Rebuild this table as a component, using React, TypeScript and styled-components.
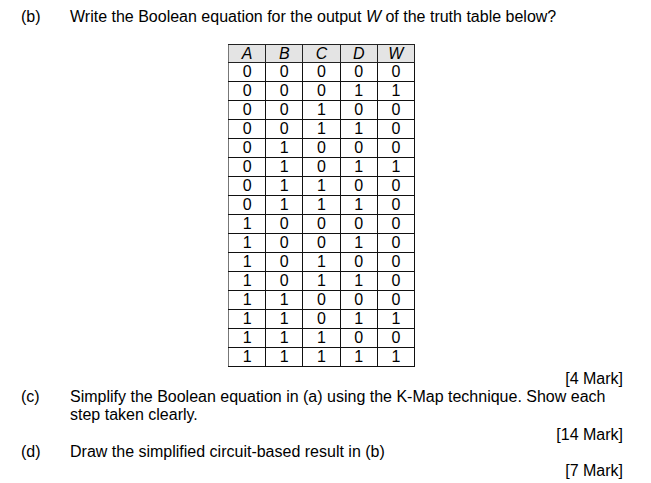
import React from "react";
import styled, { createGlobalStyle } from "styled-components";

const Global = createGlobalStyle`
  html, body { margin: 0; padding: 0; background: #fff; }
  body { font-family: "Liberation Sans", Arial, sans-serif; color: #000; }
`;

const Page = styled.div`
  width: 651px;
  height: 483px;
  box-sizing: border-box;
  padding: 8px 28px 0 21px;
  font-size: 16px;
  line-height: 18px;
`;

const Question = styled.div<{ $mt?: number }>`
  display: grid;
  grid-template-columns: 49px 1fr;
  margin-top: ${(p) => p.$mt ?? 0}px;
`;

const Label = styled.span``;

const Body = styled.div``;

const Marks = styled.div<{ $mt?: number }>`
  text-align: right;
  margin-top: ${(p) => p.$mt ?? 0}px;
`;

const TableWrap = styled.div`
  display: flex;
  padding-left: 207px;
  margin-top: 18px;
`;

const Table = styled.table`
  border-collapse: collapse;
  table-layout: fixed;
  width: 187px;
  font-size: 16px;
`;

const Th = styled.th<{ $c: string }>`
  height: 17px;
  padding: 0;
  background: #e4e4e4;
  font-style: italic;
  font-weight: normal;
  text-align: center;
  border: 1px solid #222;
  border-left-color: ${(p) => p.$c};
  line-height: 17px;
`;

const Td = styled.td<{ $c: string }>`
  height: 18px;
  padding: 0;
  text-align: center;
  border: 1px solid #111;
  border-left-color: ${(p) => p.$c};
  line-height: 18px;
`;

const leftColors = ["#777", "#111", "#888", "#888", "#111"];
const heads = ["A", "B", "C", "D", "W"];
const W = [0, 1, 0, 0, 0, 1, 0, 0, 0, 0, 0, 0, 0, 1, 0, 1];

export default function App() {
  const rows = Array.from({ length: 16 }, (_, i) => [
    (i >> 3) & 1,
    (i >> 2) & 1,
    (i >> 1) & 1,
    i & 1,
    W[i],
  ]);
  return (
    <>
      <Global />
      <Page>
        <Question>
          <Label>(b)</Label>
          <Body>
            Write the Boolean equation for the output <i>W</i> of the truth table below?
          </Body>
        </Question>
        <TableWrap>
          <Table>
            <thead>
              <tr>
                {heads.map((h, i) => (
                  <Th key={h} $c={leftColors[i]}>{h}</Th>
                ))}
              </tr>
            </thead>
            <tbody>
              {rows.map((r, ri) => (
                <tr key={ri}>
                  {r.map((v, ci) => (
                    <Td key={ci} $c={leftColors[ci]}>{v}</Td>
                  ))}
                </tr>
              ))}
            </tbody>
          </Table>
        </TableWrap>
        <Marks $mt={3}>[4 Mark]</Marks>
        <Question>
          <Label>(c)</Label>
          <Body>
            Simplify the Boolean equation in (a) using the K-Map technique. Show each step taken clearly.
          </Body>
        </Question>
        <Marks $mt={2}>[14 Mark]</Marks>
        <Question $mt={-1}>
          <Label>(d)</Label>
          <Body>Draw the simplified circuit-based result in (b)</Body>
        </Question>
        <Marks $mt={1}>[7 Mark]</Marks>
      </Page>
    </>
  );
}
